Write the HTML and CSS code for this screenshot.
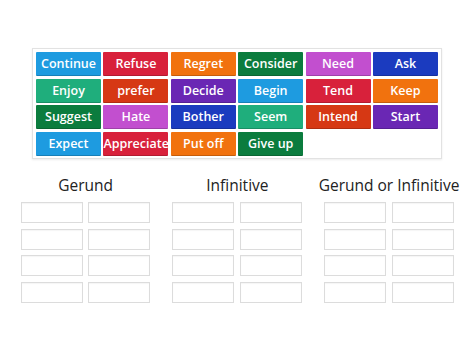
FILE: index.html
```html
<!DOCTYPE html>
<html lang="en">

<head>
    <meta charset="UTF-8">
    <title>Group sort</title>
    <link rel="stylesheet" href="styles.css">
</head>

<body>
    <div id="wrap">
        <ul id="cards">
            <li class="c1">Continue</li>
            <li class="c2">Refuse</li>
            <li class="c3">Regret</li>
            <li class="c4">Consider</li>
            <li class="c5">Need</li>
            <li class="c6">Ask</li>
            <li class="c7">Enjoy</li>
            <li class="c8">prefer</li>
            <li class="c9">Decide</li>
            <li class="c1">Begin</li>
            <li class="c2">Tend</li>
            <li class="c3">Keep</li>
            <li class="c4">Suggest</li>
            <li class="c5">Hate</li>
            <li class="c6">Bother</li>
            <li class="c7">Seem</li>
            <li class="c8">Intend</li>
            <li class="c9">Start</li>
            <li class="c1">Expect</li>
            <li class="c2">Appreciate</li>
            <li class="c3">Put off</li>
            <li class="c4">Give up</li>
        </ul>

        <section id="groups">
            <div class="group">
                <h2>Gerund</h2>
                <div class="slots">
                    <span></span><span></span><span></span><span></span>
                    <span></span><span></span><span></span><span></span>
                </div>
            </div>
            <div class="group">
                <h2>Infinitive</h2>
                <div class="slots">
                    <span></span><span></span><span></span><span></span>
                    <span></span><span></span><span></span><span></span>
                </div>
            </div>
            <div class="group">
                <h2>Gerund or Infinitive</h2>
                <div class="slots">
                    <span></span><span></span><span></span><span></span>
                    <span></span><span></span><span></span><span></span>
                </div>
            </div>
        </section>
    </div>
</body>

</html>
```

FILE: styles.css
```css
body {
    margin: 0;
    background: #fff;
    font-family: "Open Sans", "Liberation Sans", Arial, sans-serif;
}

ul {
    padding: 0;
    margin: 0;
    list-style: none;
}

#wrap {
    width: 474px;
    height: 355px;
    overflow: hidden;
}

#cards {
    display: grid;
    grid-template-columns: repeat(6, 65px);
    grid-auto-rows: 24px;
    column-gap: 2.4px;
    row-gap: 2.6px;
    width: 402px;
    height: 103px;
    margin: 48px 0 0 32px;
    padding: 3px;
    border: 1px solid #e2e2e2;
    box-shadow: 0 1px 2px rgba(0, 0, 0, .08);
}

#cards li {
    color: #fff;
    font-size: 12.5px;
    font-weight: 600;
    line-height: 23px;
    text-align: center;
    white-space: nowrap;
    border-radius: 1px;
    border-bottom: 1px solid rgba(0, 0, 0, .18);
}

.c1 { background: #1e9be0; }
.c2 { background: #d8213b; }
.c3 { background: #f1720e; }
.c4 { background: #0b7c3e; }
.c5 { background: #c24fcf; }
.c6 { background: #1b3bbf; }
.c7 { background: #1fae7c; }
.c8 { background: #d63814; }
.c9 { background: #6a27b4; }

#groups {
    display: flex;
    gap: 21.7px;
    margin: 15px 0 0 20.7px;
}

.group {
    width: 130px;
}

.group h2 {
    margin: 0 -10px 5px;
    color: #222;
    font-size: 15.5px;
    font-weight: 400;
    line-height: 23px;
    text-align: center;
    white-space: nowrap;
}

.slots {
    display: grid;
    grid-template-columns: repeat(2, 62px);
    grid-auto-rows: 21px;
    column-gap: 5.5px;
    row-gap: 5.5px;
}

.slots span {
    border: 1px solid #dcdcdc;
    box-shadow: inset 0 1px 1px rgba(0, 0, 0, .04);
}
```
